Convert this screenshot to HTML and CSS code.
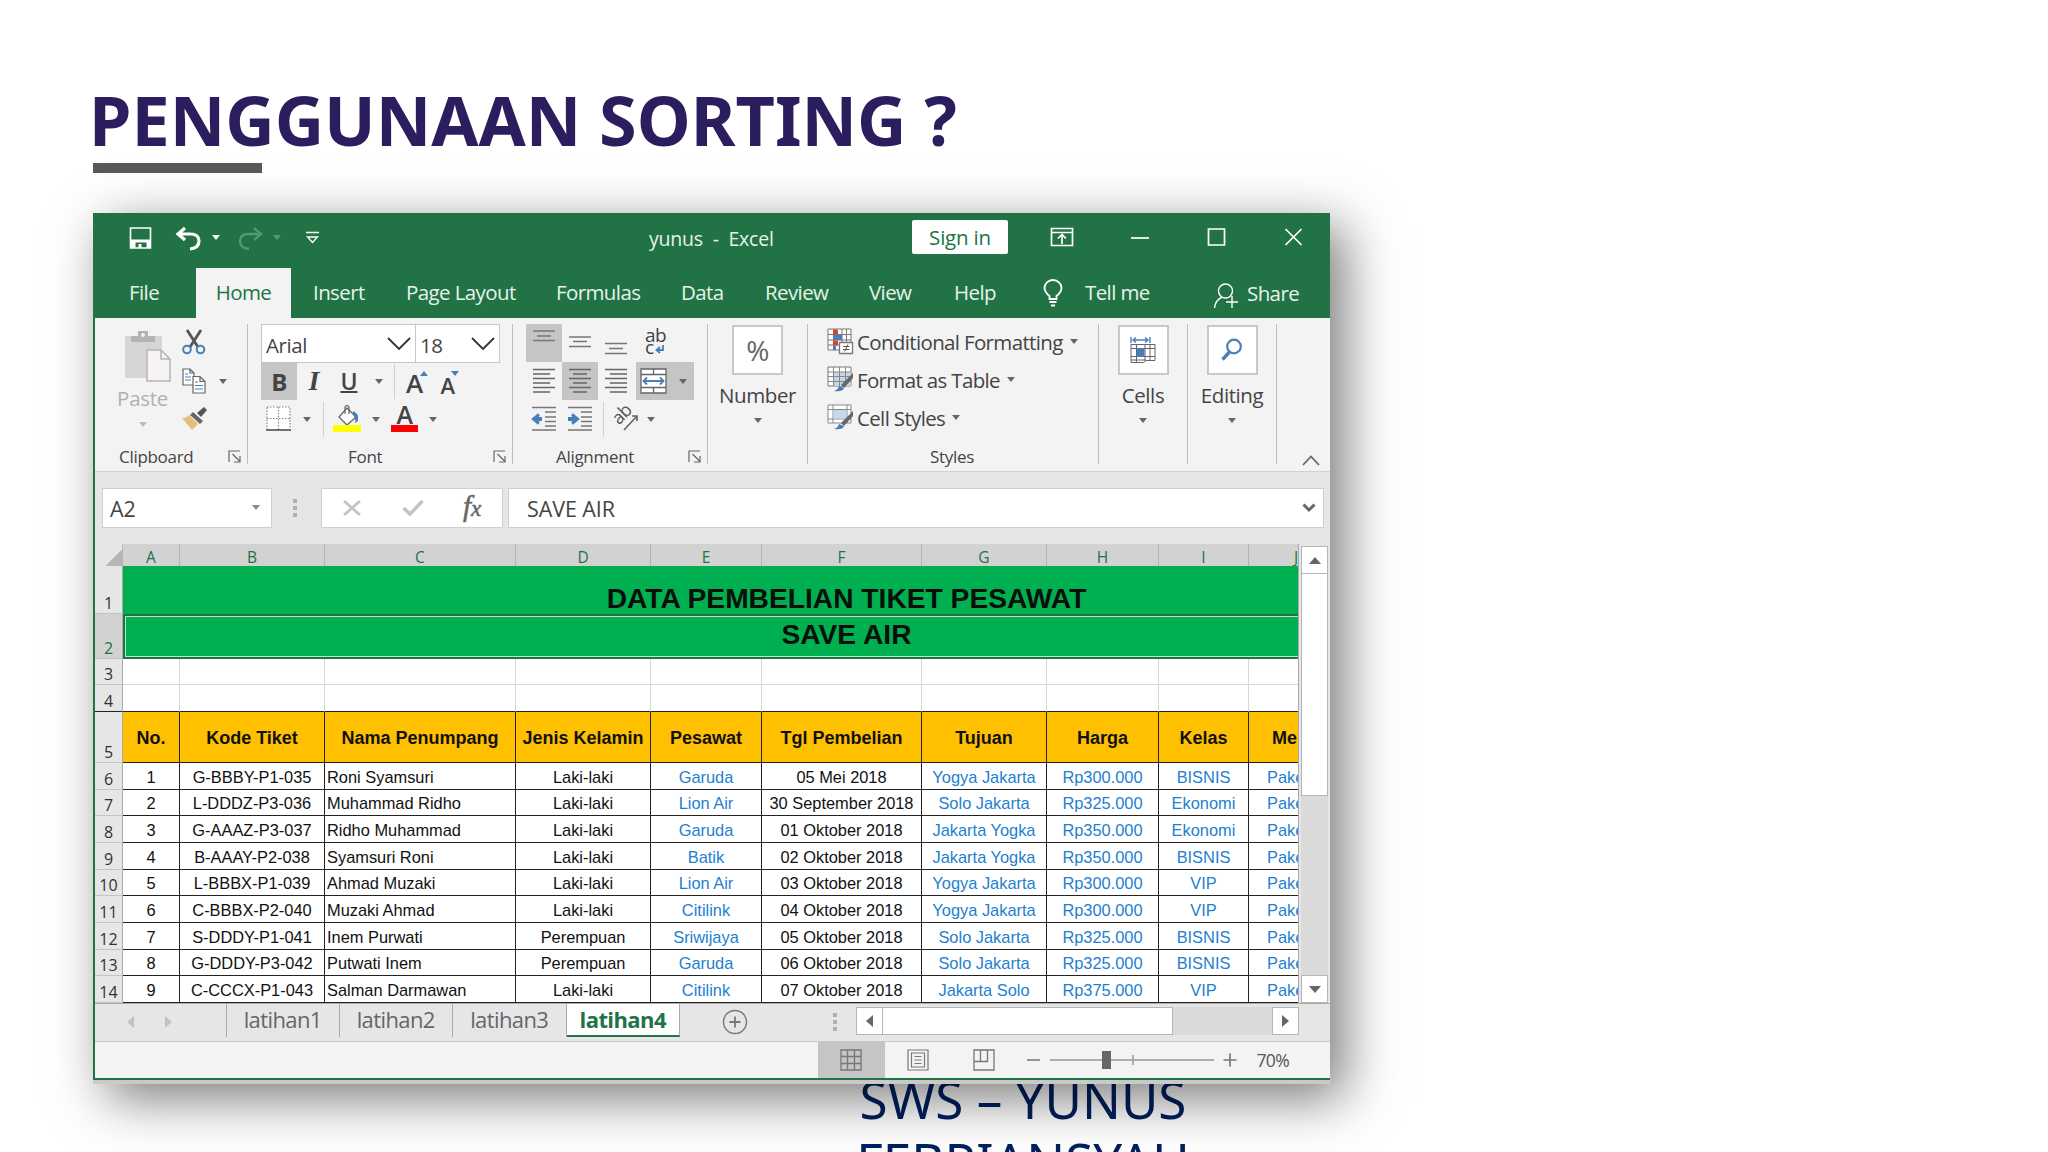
FILE: index.html
```html
<!DOCTYPE html>
<html lang="id">
<head>
    <meta charset="UTF-8">
    <meta name="viewport" content="width=device-width, initial-scale=1.0">
    <title>Penggunaan Sorting</title>
    <link rel="stylesheet" href="styles.css">
</head>
<body>
    <h1 class="slide-title">PENGGUNAAN SORTING ?</h1>
    <div class="title-bar"></div>

    <div class="window">
        <!-- Title bar -->
        <div class="caption">
            <svg class="qat" width="200" height="28" viewBox="0 0 200 28" fill="none" stroke="#fff">
                <path d="M1.500 3h20v20h-20z" stroke-width="1.600"/>
                <path d="M1.500 14.500h20V23h-3.500v-6H6v6H1.500zM9.500 19h3v4h-3z" fill="#fff" stroke="none"/>
                <path d="M6 16.500v6.500M18 16.500v6.500M6 17h12" stroke-width="1"/>
                <path d="M56 3l-7 6 7 6M50 9h11q9 0 9 7t-9 8" stroke-width="3.200"/>
                <path d="M83 10h8l-4 5z" fill="#fff" stroke="none"/>
                <g stroke="#4f9a6f"><path d="M125 3l7 6-7 6M131 9h-11q-9 0-9 7t9 8" stroke-width="2.400"/></g>
                <path d="M144 10h8l-4 5z" fill="#4f9a6f" stroke="none"/>
                <path d="M177 7.500h13M178.500 12h10l-5 5.500z" stroke-width="1.300"/>
            </svg>
            <span class="doc-name">yunus&nbsp; -&nbsp; Excel</span>
            <span class="sign-in">Sign in</span>
            <svg class="win-buttons" width="256" height="24" viewBox="0 0 256 24" fill="none" stroke="#fff" stroke-width="1.700">
                <path d="M1.500 3.500h21v17h-21zM1.500 7.500h21M12 19v-9M8 13.500l4-4 4 4"/>
                <path d="M81 13h18"/>
                <path d="M158.500 4h16v16h-16z"/>
                <path d="M235.500 4l16 16M251.500 4l-16 16"/>
            </svg>
        </div>

        <div class="tabs">
            <span class="tab t-file">File</span>
            <span class="tab t-home">Home</span>
            <span class="tab t-insert">Insert</span>
            <span class="tab t-layout">Page Layout</span>
            <span class="tab t-formulas">Formulas</span>
            <span class="tab t-data">Data</span>
            <span class="tab t-review">Review</span>
            <span class="tab t-view">View</span>
            <span class="tab t-help">Help</span>
            <svg class="bulb" width="20" height="28" viewBox="0 0 20 28" fill="none" stroke="#fff" stroke-width="1.800">
                <path d="M6.500 20v-3Q1.500 13 1.500 9a8.500 8 0 0 1 17 0q0 4-5 8v3zM6.500 23h7M8 26.500h4"/>
            </svg>
            <span class="tab t-tell">Tell me</span>
            <svg class="person" width="26" height="26" viewBox="0 0 26 26" fill="none" stroke="#fff" stroke-width="1.400">
                <ellipse cx="12.500" cy="8" rx="7" ry="7"/>
                <path d="M1.500 25q1-8 7-10.500M19 13v12M13 19h12"/>
            </svg>
            <span class="tab t-share">Share</span>
        </div>

        <!-- Ribbon -->
        <div class="ribbon">
            <div class="group g-clipboard">
                <div class="clip-body">
                    <div class="paste">
                        <svg width="48" height="53" viewBox="0 0 48 53">
                            <path d="M1 6h37v42H1z" fill="#d6d4d6"/>
                            <path d="M7 6h7V1h10v5h7v6H7z" fill="#b3b3b3"/>
                            <circle cx="19" cy="5" r="2" fill="#f3f3f3"/>
                            <path d="M23 20h14l9 9v22H23z" fill="#f6f2f5" stroke="#b5b5b5" stroke-width="1.500"/>
                            <path d="M37 20v9h9" fill="none" stroke="#b5b5b5" stroke-width="1.500"/>
                        </svg>
                        <span class="paste-label">Paste</span>
                        <i class="caret pale"></i>
                    </div>
                    <div class="clip-tools">
                        <div class="line">
                            <svg width="24" height="26" viewBox="0 0 24 26" fill="none">
                                <path d="M5 1l11 17M19 1L8 18" stroke="#555" stroke-width="2.800"/>
                                <circle cx="5" cy="20.500" r="3.800" stroke="#4a7ebb" stroke-width="2"/>
                                <circle cx="18.500" cy="20.500" r="3.800" stroke="#4a7ebb" stroke-width="2"/>
                            </svg>
                        </div>
                        <div class="line">
                            <svg width="24" height="26" viewBox="0 0 24 26" fill="#fff" stroke="#666" stroke-width="1.200">
                                <path d="M1 1h7l4 4v12H1zM8 1v4h4"/>
                                <path d="M3 6h3M3 9h6M3 12h6" stroke="#4a7ebb"/>
                                <path d="M11 8.500h7l5 5V25H11zM18 8.500v5h5"/>
                                <path d="M13 14h3M13 17.500h8M13 21h8" stroke="#4a7ebb"/>
                            </svg>
                            <i class="caret after-13"></i>
                        </div>
                        <div class="line">
                            <svg width="26" height="24" viewBox="0 0 26 24">
                                <path d="M22 0l3 3-6 7-4-4z" fill="#555"/>
                                <path d="M11 5l10 9-3 3L8 8z" fill="#666"/>
                                <path d="M7 8l9 9-6 6L0 11q5 0 7-3z" fill="#e8bd78"/>
                            </svg>
                        </div>
                    </div>
                </div>
                <div class="group-label"><span>Clipboard</span><svg class="launcher" width="14" height="13" viewBox="0 0 14 13"><path d="M1 12V1h11M4.500 4l7 7M12 6v6H6" fill="none" stroke="#666" stroke-width="1.200"/></svg></div>
            </div>

            <div class="group g-font">
                <div class="line">
                    <span class="combo combo-name">Arial<svg width="24" height="14" viewBox="0 0 24 14"><path d="M1 1l11 11L23 1" fill="none" stroke="#333" stroke-width="1.800"/></svg></span>
                    <span class="combo combo-size">18<svg width="24" height="14" viewBox="0 0 24 14"><path d="M1 1l11 11L23 1" fill="none" stroke="#333" stroke-width="1.800"/></svg></span>
                </div>
                <div class="line">
                    <span class="toggle bold">B</span>
                    <span class="italic">I</span>
                    <span class="underline">U</span>
                    <i class="caret after-16"></i>
                    <i class="split split-a"></i>
                    <span class="grow">A</span><i class="tri-up"></i>
                    <span class="shrink">A</span><i class="tri-down"></i>
                </div>
                <div class="line">
                    <svg class="borders-icon" width="26" height="26" viewBox="0 0 26 26" fill="none" stroke="#888" stroke-width="1.200">
                        <path d="M1 1h23v23H1zM12.500 1v23M1 12.500h23" fill="#fff" stroke-dasharray="1.500 1.500"/>
                        <path d="M0 24h25" stroke="#555" stroke-width="1.600"/>
                    </svg>
                    <i class="caret after-11"></i>
                    <i class="split split-b"></i>
                    <svg class="bucket" width="28" height="28" viewBox="0 0 28 28">
                        <path d="M14 3l9 9-9 8-8-8z" fill="#fff" stroke="#666" stroke-width="1.300"/>
                        <path d="M12 9V2q2-3 4 0v7" fill="none" stroke="#666" stroke-width="1.200"/>
                        <path d="M20 6q6 2 5 10l-3 2q1-5-2-8z" fill="#4a7ebb"/>
                        <path d="M0 20h28v7H0z" fill="#ff0"/>
                    </svg>
                    <i class="caret after-11"></i>
                    <span class="font-color">A</span>
                    <i class="caret after-11"></i>
                </div>
                <div class="group-label"><span>Font</span><svg class="launcher" width="14" height="13" viewBox="0 0 14 13"><path d="M1 12V1h11M4.500 4l7 7M12 6v6H6" fill="none" stroke="#666" stroke-width="1.200"/></svg></div>
            </div>

            <div class="group g-align">
                <div class="line">
                    <span class="toggle"><svg width="24" height="26" viewBox="0 0 24 26" stroke="#777" stroke-width="1.500"><path d="M1 1h22M5 6h14M1 10.500h22"/></svg></span>
                    <span class="plain"><svg width="24" height="26" viewBox="0 0 24 26" stroke="#777" stroke-width="1.500"><path d="M1 7h22M5 11.500h14M1 16.500h22"/></svg></span>
                    <span class="plain"><svg width="24" height="26" viewBox="0 0 24 26" stroke="#777" stroke-width="1.500"><path d="M1 13.500h22M5 18.500h14M1 23.500h22"/></svg></span>
                    <span class="wrap-text">ab<br>c<svg width="9" height="9" viewBox="0 0 9 9"><path d="M8 0v5H2M5 2L1.500 5 5 8" fill="none" stroke="#4a7ebb" stroke-width="1.800"/></svg></span>
                </div>
                <div class="line">
                    <span class="plain"><svg width="24" height="26" viewBox="0 0 24 26" stroke="#666" stroke-width="1.400"><path d="M1 1.500h22M1 6h17M1 10.500h22M1 15h17M1 19.500h22M1 24h17"/></svg></span>
                    <span class="toggle"><svg width="24" height="26" viewBox="0 0 24 26" stroke="#666" stroke-width="1.400"><path d="M1 1.500h22M5 6h14M1 10.500h22M5 15h14M1 19.500h22M5 24h14"/></svg></span>
                    <span class="plain"><svg width="24" height="26" viewBox="0 0 24 26" stroke="#666" stroke-width="1.400"><path d="M1 1.500h22M6 6h17M1 10.500h22M6 15h17M1 19.500h22M6 24h17"/></svg></span>
                    <span class="toggle merge">
                        <svg width="27" height="26" viewBox="0 0 27 26" fill="#fff" stroke="#666" stroke-width="1.300">
                            <path d="M1 1h25v24H1zM1 6.500h25M1 19.500h25M13.500 1v5.500M13.500 19.500V25"/>
                            <path d="M4 13h19M7 9.500L3.500 13 7 16.500M20 9.500l3.500 3.500-3.500 3.500" fill="none" stroke="#4a7ebb" stroke-width="1.800"/>
                        </svg>
                        <i class="caret after-12"></i>
                    </span>
                </div>
                <div class="line indent-line">
                    <svg width="26" height="26" viewBox="0 0 26 26" stroke="#777" stroke-width="1.400"><path d="M1 1.500h24M14 6h11M14 11h11M14 15.500h11M14 20h11M1 24h24"/><path d="M11 13H4" stroke="#4a7ebb" stroke-width="4"/><path d="M8 8.500L2.500 13 8 17.500" fill="none" stroke="#4a7ebb" stroke-width="3"/></svg>
                    <svg width="26" height="26" viewBox="0 0 26 26" stroke="#777" stroke-width="1.400"><path d="M1 1.500h24M14 6h11M14 11h11M14 15.500h11M14 20h11M1 24h24"/><path d="M1 13h7" stroke="#4a7ebb" stroke-width="4"/><path d="M5 8.500l5.500 4.500L5 17.500" fill="none" stroke="#4a7ebb" stroke-width="3"/></svg>
                    <i class="split"></i>
                    <svg class="orient" width="26" height="26" viewBox="0 0 26 26"><text x="4" y="19" transform="rotate(-45 5 18)" class="orient-text">ab</text><path d="M10 24L23 10M18 10h5v5" fill="none" stroke="#666" stroke-width="1.700"/></svg>
                    <i class="caret after-8"></i>
                </div>
                <div class="group-label"><span>Alignment</span><svg class="launcher" width="14" height="13" viewBox="0 0 14 13"><path d="M1 12V1h11M4.500 4l7 7M12 6v6H6" fill="none" stroke="#666" stroke-width="1.200"/></svg></div>
            </div>

            <div class="group g-big g-number">
                <span class="big-icon">%</span>
                <span class="big-label">Number</span>
                <i class="caret"></i>
            </div>

            <div class="group g-styles">
                <div class="line">
                    <svg width="27" height="27" viewBox="0 0 27 27">
                        <path d="M1 1h23v21H1zM6.500 1v21M15 1v21M19.500 1v21M1 6.500h23M1 12h23M1 17h23" fill="#fff" stroke="#777"/>
                        <path d="M6 1.500h5v5H6zM6 12.500h5v5H6z" fill="#d24726"/><path d="M6 7h9v5H6zM6 18h3v4H6z" fill="#4a7ebb"/>
                        <path d="M12.500 14.500h13v11h-13z" fill="#fff" stroke="#777" stroke-width="1.300"/>
                        <path d="M16 18.500h6.500M16 21.500h6.500M21 16.500l-3.500 7" stroke="#555"/>
                    </svg>
                    <span>Conditional Formatting</span><i class="caret"></i>
                </div>
                <div class="line">
                    <svg width="27" height="27" viewBox="0 0 27 27">
                        <path d="M1 1h23v19H1z" fill="#fff" stroke="#777"/><path d="M6 6h18v14H6z" fill="#c5d5e6"/>
                        <path d="M6.500 1v19M12.500 1v19M18.500 1v19M1 6h23M1 10.500h23M1 15.500h23" stroke="#888"/>
                        <path d="M26 7v5l-9 10-3-3z" fill="#666"/><path d="M7 25q4-1 5-5l5 2q-1 4-10 3z" fill="#4a7ebb"/>
                    </svg>
                    <span>Format as Table</span><i class="caret"></i>
                </div>
                <div class="line">
                    <svg width="27" height="27" viewBox="0 0 27 27">
                        <path d="M1 1h23v18H1zM6 1v18M1 5.500h23M20 1v18M1 15h23" fill="#fff" stroke="#888"/><path d="M6.500 6h13v8.500h-13z" fill="#c5d9ea"/>
                        <path d="M26 7v5l-9 10-3-3z" fill="#666"/><path d="M7 25q4-1 5-5l5 2q-1 4-10 3z" fill="#4a7ebb"/>
                    </svg>
                    <span>Cell Styles</span><i class="caret"></i>
                </div>
                <div class="group-label"><span>Styles</span></div>
            </div>

            <div class="group g-big g-cells">
                <span class="big-icon">
                    <svg width="26" height="28" viewBox="0 0 26 28" fill="none">
                        <path d="M1 1v6M20 1v6M3 4h15M6 1.500L3 4l3 2.500M15 1.500L18 4l-3 2.500" stroke="#4a7ebb" stroke-width="1.400"/>
                        <path d="M1 8.500h24v16h-9q-2 3-5 2H1zM6.500 8.500V26M15 8.500v16M20 8.500v16M1 12.500h24M1 20.500h24M1 24h15" stroke="#666"/>
                        <path d="M7 12h7.500v9H7z" fill="#4a7ebb"/>
                    </svg>
                </span>
                <span class="big-label">Cells</span>
                <i class="caret"></i>
            </div>

            <div class="group g-big g-editing">
                <span class="big-icon">
                    <svg width="22" height="24" viewBox="0 0 22 24" fill="none" stroke="#4a7ebb"><circle cx="13" cy="8.500" r="6.800" stroke-width="2.200"/><path d="M8.500 14L1.500 21.500" stroke-width="3.400"/></svg>
                </span>
                <span class="big-label">Editing</span>
                <i class="caret"></i>
            </div>
            <svg class="collapse" width="18" height="11" viewBox="0 0 18 11"><path d="M1 10l8-8.500L17 10" fill="none" stroke="#666" stroke-width="1.800"/></svg>
        </div>

        <!-- Formula bar -->
        <div class="formula-bar">
            <div class="field name-box">A2<i class="caret"></i></div>
            <div class="dots"><i></i><i></i><i></i></div>
            <div class="field fx-box">
                <svg width="20" height="18" viewBox="0 0 20 18"><path d="M2 2l16 14M18 2L2 16" stroke="#c3c3c3" stroke-width="2.800"/></svg>
                <svg width="22" height="18" viewBox="0 0 22 18"><path d="M1.500 9l6.500 6L20.500 2" fill="none" stroke="#c3c3c3" stroke-width="3.400"/></svg>
                <span class="fx">f<small>x</small></span>
            </div>
            <div class="field formula">SAVE AIR<svg width="14" height="10" viewBox="0 0 14 10"><path d="M1.500 1.500L7 7l5.500-5.500" fill="none" stroke="#666" stroke-width="3"/></svg></div>
        </div>

        <!-- Worksheet -->
        <div class="sheet-area">
            <div class="sheet">
                <div class="row letters">
                    <span class="corner"></span><span>A</span><span>B</span><span>C</span><span>D</span><span>E</span><span>F</span><span>G</span><span>H</span><span>I</span><span>J</span>
                </div>
                <div class="merged-row m1"><span class="num">1</span><div class="merged">DATA PEMBELIAN TIKET PESAWAT</div></div>
                <div class="merged-row m2"><span class="num active">2</span><div class="merged">SAVE AIR</div></div>
                <div class="row blank"><span class="num">3</span><span></span><span></span><span></span><span></span><span></span><span></span><span></span><span></span><span></span><span></span></div>
                <div class="row blank last"><span class="num">4</span><span></span><span></span><span></span><span></span><span></span><span></span><span></span><span></span><span></span><span></span></div>
                <div class="row heads"><span class="num">5</span><span>No.</span><span>Kode Tiket</span><span>Nama Penumpang</span><span>Jenis Kelamin</span><span>Pesawat</span><span>Tgl Pembelian</span><span>Tujuan</span><span>Harga</span><span>Kelas</span><span>Menu</span></div>
                <div class="row data"><span class="num">6</span><span>1</span><span>G-BBBY-P1-035</span><span>Roni Syamsuri</span><span>Laki-laki</span><span>Garuda</span><span>05 Mei 2018</span><span>Yogya Jakarta</span><span>Rp300.000</span><span>BISNIS</span><span>Paket</span></div>
                <div class="row data"><span class="num">7</span><span>2</span><span>L-DDDZ-P3-036</span><span>Muhammad Ridho</span><span>Laki-laki</span><span>Lion Air</span><span>30 September 2018</span><span>Solo Jakarta</span><span>Rp325.000</span><span>Ekonomi</span><span>Paket</span></div>
                <div class="row data"><span class="num">8</span><span>3</span><span>G-AAAZ-P3-037</span><span>Ridho Muhammad</span><span>Laki-laki</span><span>Garuda</span><span>01 Oktober 2018</span><span>Jakarta Yogka</span><span>Rp350.000</span><span>Ekonomi</span><span>Paket</span></div>
                <div class="row data"><span class="num">9</span><span>4</span><span>B-AAAY-P2-038</span><span>Syamsuri Roni</span><span>Laki-laki</span><span>Batik</span><span>02 Oktober 2018</span><span>Jakarta Yogka</span><span>Rp350.000</span><span>BISNIS</span><span>Paket</span></div>
                <div class="row data"><span class="num">10</span><span>5</span><span>L-BBBX-P1-039</span><span>Ahmad Muzaki</span><span>Laki-laki</span><span>Lion Air</span><span>03 Oktober 2018</span><span>Yogya Jakarta</span><span>Rp300.000</span><span>VIP</span><span>Paket</span></div>
                <div class="row data"><span class="num">11</span><span>6</span><span>C-BBBX-P2-040</span><span>Muzaki Ahmad</span><span>Laki-laki</span><span>Citilink</span><span>04 Oktober 2018</span><span>Yogya Jakarta</span><span>Rp300.000</span><span>VIP</span><span>Paket</span></div>
                <div class="row data"><span class="num">12</span><span>7</span><span>S-DDDY-P1-041</span><span>Inem Purwati</span><span>Perempuan</span><span>Sriwijaya</span><span>05 Oktober 2018</span><span>Solo Jakarta</span><span>Rp325.000</span><span>BISNIS</span><span>Paket</span></div>
                <div class="row data"><span class="num">13</span><span>8</span><span>G-DDDY-P3-042</span><span>Putwati Inem</span><span>Perempuan</span><span>Garuda</span><span>06 Oktober 2018</span><span>Solo Jakarta</span><span>Rp325.000</span><span>BISNIS</span><span>Paket</span></div>
                <div class="row data"><span class="num">14</span><span>9</span><span>C-CCCX-P1-043</span><span>Salman Darmawan</span><span>Laki-laki</span><span>Citilink</span><span>07 Oktober 2018</span><span>Jakarta Solo</span><span>Rp375.000</span><span>VIP</span><span>Paket</span></div>
            </div>
            <div class="vscroll">
                <span class="sb-button"><i class="arrow up"></i></span>
                <span class="v-thumb"></span>
                <span class="sb-button"><i class="arrow down"></i></span>
            </div>
        </div>

        <!-- Sheet tabs -->
        <div class="sheet-tabs">
            <i class="arrow left pale-arrow nav-prev"></i>
            <i class="arrow right pale-arrow nav-next"></i>
            <span class="sheet-tab first">latihan1</span>
            <span class="sheet-tab">latihan2</span>
            <span class="sheet-tab">latihan3</span>
            <span class="sheet-tab current">latihan4</span>
            <svg class="add" width="26" height="26" viewBox="0 0 26 26" fill="none" stroke="#777" stroke-width="1.400"><circle cx="13" cy="13" r="11.500"/><path d="M13 7.500v11M7.500 13h11" stroke-width="1.800"/></svg>
            <div class="dots tab-dots"><i></i><i></i><i></i></div>
            <div class="hscroll">
                <span class="sb-button"><i class="arrow left"></i></span>
                <span class="h-thumb"></span>
                <span class="sb-button h-end"><i class="arrow right"></i></span>
            </div>
        </div>

        <!-- Status bar -->
        <div class="status">
            <span class="view on"><svg width="22" height="22" viewBox="0 0 22 22" fill="none" stroke="#777" stroke-width="1.300"><path d="M1 1h20v20H1zM7.500 1v20M14.500 1v20M1 7.500h20M1 14.500h20"/></svg></span>
            <span class="view"><svg width="22" height="22" viewBox="0 0 22 22" fill="none" stroke="#777" stroke-width="1.200"><path d="M1 1h20v20H1zM4.500 4h13v14h-13zM7.500 7.500h7M7.500 11h7M7.500 14.500h7"/></svg></span>
            <span class="view"><svg width="22" height="22" viewBox="0 0 22 22" fill="none" stroke="#777" stroke-width="1.300"><path d="M1 1h20v20H1zM1 12.500h13.500V1M7.500 1v11.500"/></svg></span>
            <svg class="zoom-bar" width="212" height="22" viewBox="0 0 212 22" stroke="#777">
                <path d="M1 11h13M197.500 11h13M204 4.500v13" stroke-width="1.700"/>
                <path d="M24 11h164M107 6v10" stroke="#999" stroke-width="1.500"/>
                <path d="M76 2h9v18h-9z" fill="#666" stroke="none"/>
            </svg>
            <span class="percent">70%</span>
        </div>
        <div class="bottom-edge"></div>
    </div>

    <p class="footer">SWS – YUNUS<br>FEBRIANSYAH</p>
</body>
</html>
```
FILE: styles.css
```css
* {
    box-sizing: border-box;
}

body {
    margin: 0;
    width: 2048px;
    height: 1152px;
    overflow: hidden;
    background: #fff;
    font-family: "Open Sans", "Noto Sans", sans-serif;
}

svg {
    display: block;
    flex: none;
}

/* Slide title */
.slide-title {
    margin: 0;
    padding: 72px 0 0 89px;
    height: 163px;
    font-family: "Noto Sans", sans-serif;
    font-size: 68.3px;
    line-height: 96px;
    font-weight: 700;
    color: #2b1d5e;
    white-space: nowrap;
}

.title-bar {
    width: 169px;
    height: 10px;
    margin-left: 92.5px;
    background: #595959;
}

/* Window */
.window {
    position: relative;
    z-index: 1;
    width: 1237px;
    height: 871px;
    margin: 40px 0 0 93px;
    background: #e6e6e6;
    border-left: 2px solid #217346;
    box-shadow: 14px 14px 50px rgba(0, 0, 0, 0.53);
    color: #444;
    font-size: 20.5px;
    letter-spacing: -0.65px;
    white-space: nowrap;
}

.caption {
    display: flex;
    align-items: center;
    height: 55px;
    padding: 0 0 7px 34px;
    background: #217346;
    color: #e6f2ea;
    font-size: 19.5px;
    letter-spacing: -0.2px;
}

.qat {
    margin-top: 4px;
}

.doc-name {
    width: 263px;
    margin-left: 320px;
    padding-top: 3px;
}

.sign-in {
    width: 96px;
    height: 34px;
    border-radius: 2px;
    background: #fff;
    color: #217346;
    text-align: center;
    line-height: 34px;
    font-size: 20.5px;
}

.win-buttons {
    margin-left: 42px;
}

.tabs {
    display: flex;
    align-items: center;
    height: 50px;
    background: #217346;
    color: #e6f2ea;
    font-size: 20.5px;
    letter-spacing: -0.6px;
}

.tab {
    padding-bottom: 2px;
}

.t-file { width: 101px; padding-left: 34px; }
.t-home {
    width: 95px;
    height: 50px;
    line-height: 49px;
    text-align: center;
    background: #f3f3f3;
    color: #217346;
}
.t-insert { width: 115px; padding-left: 22px; }
.t-layout { width: 150px; }
.t-formulas { width: 125px; }
.t-data { width: 84px; }
.t-review { width: 104px; }
.t-view { width: 85px; }
.t-help { width: 89px; }
.bulb { margin-right: 22px; }
.t-tell { width: 128px; }
.person { margin: 6px 8px 0 0; }
.t-share { padding-bottom: 0; }

/* Ribbon */
.ribbon {
    display: flex;
    height: 154px;
    padding-top: 6px;
    background: #f3f3f3;
    border-bottom: 1px solid #d2d2d2;
}

.group {
    height: 140px;
    border-right: 1px solid #bebebe;
}

.line {
    display: flex;
    align-items: center;
    height: 38px;
}

.caret {
    flex: none;
    width: 0;
    height: 0;
    border: 4px solid transparent;
    border-top: 5px solid #666;
    border-bottom: none;
}

.pale { border-top-color: #bbb; }
.after-8 { margin-left: 7px; }
.after-11 { margin-left: 11px; }
.after-12 { margin-left: 12px; }
.after-13 { margin-left: 13px; }
.after-16 { margin-left: 17px; }

.split {
    flex: none;
    width: 1px;
    height: 35px;
    background: #d0d0d0;
}

.group-label {
    display: flex;
    align-items: center;
    height: 34px;
    font-size: 17px;
    letter-spacing: -0.3px;
}

.launcher { margin: 0 0 0 auto; }

.g-clipboard { width: 153px; }
.clip-body { display: flex; height: 114px; }
.paste {
    display: flex;
    flex-direction: column;
    align-items: center;
    width: 87px;
    padding: 6px 0 0 11px;
    color: #b0b0b0;
}
.paste svg { margin-left: 7px; }
.paste-label { line-height: 28px; margin: 1px 3px 10px 0; letter-spacing: -0.3px; }
.paste .caret { margin-right: 2px; }
.clip-tools .line:first-child svg { margin-top: -2px; }
.g-clipboard .group-label { margin-top: 1px; padding: 0 5px 0 24px; }
.g-font .group-label { margin-top: 1px; padding: 0 5px 0 87px; }
.g-align .group-label { margin-top: 1px; padding: 0 5px 0 30px; }

.g-font { width: 265px; padding-left: 13px; }
.combo {
    display: flex;
    align-items: center;
    justify-content: space-between;
    height: 39px;
    border: 1px solid #c6c6c6;
    background: #fff;
    padding: 3px 4px 0;
    color: #444;
    letter-spacing: -0.4px;
}
.combo svg { margin-top: -2px; }
.combo-name { width: 155px; }
.combo-size { width: 84px; border-left: none; }

.toggle,
.plain {
    display: flex;
    align-items: center;
    justify-content: center;
    width: 36px;
    height: 38px;
    flex: none;
}
.toggle { background: #c5c5c5; }

.bold { font-weight: 700; font-size: 24px; }
.italic {
    width: 36px;
    padding-right: 3px;
    text-align: center;
    font-family: "Liberation Serif", serif;
    font-style: italic;
    font-weight: 700;
    font-size: 28px;
}
.underline {
    width: 18px;
    text-align: center;
    font-weight: 600;
    font-size: 23px;
    letter-spacing: 0;
    text-decoration: underline;
    text-decoration-thickness: 2px;
    margin-left: 7px;
}
.split-a { margin: 0 11px; }
.split-b { margin: 0 9px 0 12px; }
.grow { font-size: 26px; font-weight: 600; line-height: 38px; padding-top: 4px; }
.shrink { font-size: 22px; font-weight: 600; padding-top: 7px; margin-left: 13px; }
.tri-up,
.tri-down {
    border: 4px solid transparent;
    margin: -16px 0 0 -3px;
}
.tri-up { border-bottom: 5px solid #4a7ebb; border-top: none; }
.tri-down { border-top: 5px solid #4a7ebb; border-bottom: none; }
.borders-icon { margin-left: 5px; }
.font-color {
    width: 27px;
    height: 26px;
    margin-left: 11px;
    border-bottom: 7px solid #f00;
    text-align: center;
    font-size: 25px;
    font-weight: 600;
    line-height: 17px;
}

.g-align { width: 195px; padding-left: 13px; }
.wrap-text {
    margin-left: 11px;
    font-size: 19px;
    line-height: 12px;
    padding-bottom: 3px;
}
.wrap-text svg { display: inline-block; margin-left: 2px; }
.merge { width: 58px; margin-left: 2px; padding-right: 3px; }
.indent-line { padding-left: 5px; }
.indent-line svg { margin-right: 10px; }
.indent-line .orient { margin: 0 0 0 10px; }
.orient-text { font-size: 18px; fill: #555; }

.g-big {
    display: flex;
    flex-direction: column;
    align-items: center;
}
.big-icon {
    display: flex;
    align-items: center;
    justify-content: center;
    width: 51px;
    height: 50px;
    margin-top: 1px;
    border: 2px solid #c8c8c8;
    background: #fff;
    font-size: 28px;
    color: #666;
}
.big-label { line-height: 28px; margin: 6px 0 9px; letter-spacing: -0.4px; }
.g-number { width: 100px; }
.g-cells, .g-editing { width: 89px; }

.g-styles { width: 291px; padding-left: 19px; }
.g-styles .line span { margin: -3px 7px 0 3px; }
.g-styles .line .caret { margin-top: -4px; }
.g-styles .line svg { margin-top: -3px; }
.g-styles .group-label { margin-top: 1px; padding-left: 103px; }
.collapse { margin: 131px 0 0 25px; }

/* Formula bar */
.formula-bar {
    display: flex;
    height: 72px;
    padding-top: 16px;
}
.field {
    display: flex;
    align-items: center;
    height: 40px;
    border: 1px solid #cfcfcf;
    background: #fff;
    font-size: 21.5px;
    letter-spacing: -0.1px;
}
.name-box {
    width: 170px;
    margin-left: 7px;
    padding: 0 11px 0 7px;
    justify-content: space-between;
}
.name-box .caret { margin-top: -2px; border-top-color: #888; }
.dots {
    display: flex;
    flex-direction: column;
    gap: 3px;
    width: 4px;
    margin: 11px 24px 0 21px;
}
.dots i { width: 4px; height: 4px; background: #b0b0b0; }
.fx-box { width: 182px; padding-left: 20px; gap: 40px; }
.fx {
    font-family: "Liberation Serif", serif;
    font-style: italic;
    font-size: 29px;
    color: #666;
    -webkit-text-stroke: 0.5px #666;
    margin: -3px 0 0 -1px;
}
.fx small { font-size: 23px; }
.formula {
    width: 816px;
    margin-left: 5px;
    padding: 0 7px 0 18px;
    justify-content: space-between;
}

/* Worksheet */
.sheet-area {
    display: flex;
    height: 459px;
    letter-spacing: 0;
}
.sheet {
    width: 1204px;
    overflow: hidden;
    background: #fff;
    border-right: 1px solid #ababab;
    font-family: "Liberation Sans", Arial, sans-serif;
    color: #111;
}
.row {
    display: grid;
    grid-template-columns: 28px 57px 145px 191px 135px 111px 160px 125px 112px 90px 95px;
}
.row span {
    display: flex;
    align-items: center;
    justify-content: center;
    border-right: 1px solid #222;
    border-bottom: 1px solid #222;
}
.row .num,
.merged-row .num {
    display: flex;
    flex: none;
    align-items: flex-end;
    justify-content: center;
    width: 28px;
    padding: 0;
    background: #e6e6e6;
    border-right: 1px solid #ababab;
    border-bottom: 1px solid #c4c4c4;
    color: #333;
    font-family: "Open Sans", sans-serif;
    font-size: 16px;
    line-height: 20px;
}
.merged-row .active { background: #d2d2d2; color: #217346; }

.letters {
    height: 22px;
    font-family: "Open Sans", sans-serif;
    font-size: 15.5px;
    color: #217346;
}
.letters span {
    background: #d2d2d2;
    border-right: 1px solid #b5b5b5;
    border-bottom: 2px solid #217346;
    padding-top: 2px;
}
.letters .corner {
    border-bottom: 1px solid #b5b5b5;
    background: linear-gradient(135deg, #e6e6e6 62%, #b5b5b5 62%);
}

.merged-row { display: flex; }
.merged {
    flex: none;
    width: 1447px;
    background: #00b050;
    text-align: center;
    font-size: 28.2px;
    font-weight: 700;
    color: #0b0f0b;
}
.m1 { height: 48px; }
.m1 .merged { line-height: 32px; padding-top: 16px; }
.m2 { height: 45px; }
.m2 .merged {
    border: 2px solid #217346;
    box-shadow: inset 0 0 0 1px #b5e8c9;
    line-height: 36px;
}

.blank { height: 26px; }
.blank.last { height: 27px; }
.blank span { border-color: #d8d8d8; }
.blank.last span { border-bottom-color: #222; }
.heads {
    height: 51px;
    font-size: 18px;
    font-weight: 700;
}
.heads span { background: #ffc000; padding-top: 3px; }
.heads .num { font-weight: 400; }
.heads span:last-child { justify-content: flex-start; padding-left: 23px; }
.data {
    height: 26.67px;
    font-size: 16.4px;
}
.data span { padding-top: 3px; }
.data span:nth-child(4) { justify-content: flex-start; padding-left: 2px; }
.data span:nth-child(6),
.data span:nth-child(n+8) { color: #2380cf; }
.data span:last-child { justify-content: flex-start; padding-left: 18px; }

/* Scrollbars */
.vscroll {
    display: flex;
    flex-direction: column;
    justify-content: space-between;
    width: 27px;
    margin: 2px 0 0 2px;
    background: #dadada;
}
.sb-button {
    display: flex;
    align-items: center;
    justify-content: center;
    width: 27px;
    height: 28px;
    background: #fff;
    border: 1px solid #b5b5b5;
}
.v-thumb {
    height: 223px;
    margin: -1px 0 auto;
    background: #fff;
    border: 1px solid #b5b5b5;
}
.arrow { width: 0; height: 0; border: 6px solid transparent; }
.up { border-bottom: 7px solid #666; border-top: none; }
.down { border-top: 7px solid #666; border-bottom: none; }
.left { border-right: 7px solid #666; border-left: none; }
.right { border-left: 7px solid #666; border-right: none; }

/* Sheet tabs */
.sheet-tabs {
    display: flex;
    height: 39px;
    border-top: 1px solid #ababab;
    border-bottom: 1px solid #c9c9c9;
}
.nav-prev { margin: 12px 0 0 32px; }
.nav-next { margin: 12px 54px 0 31px; }
.left.pale-arrow { border-right-color: #c3c3c3; }
.right.pale-arrow { border-left-color: #c3c3c3; }
.sheet-tab {
    width: 113.5px;
    height: 33px;
    border-right: 1px solid #ababab;
    text-align: center;
    font-size: 22px;
    letter-spacing: -0.6px;
    line-height: 31px;
    color: #666;
}
.first { border-left: 1px solid #ababab; }
.current {
    background: #fff;
    color: #217346;
    font-weight: 700;
    border-bottom: 2px solid #217346;
}
.add { margin: 5px 0 0 42px; }
.tab-dots { margin: 9px 19px 0 85px; }
.hscroll {
    display: flex;
    width: 443px;
    height: 28px;
    margin-top: 3px;
    background: #dadada;
}
.h-thumb {
    width: 291px;
    margin-left: -1px;
    background: #fff;
    border: 1px solid #b5b5b5;
}
.h-end { margin-left: auto; }

/* Status bar */
.status {
    display: flex;
    align-items: center;
    height: 36px;
    padding: 0 0 1px 723px;
    background: #f3f3f3;
    font-size: 17.5px;
    color: #555;
}
.view {
    display: flex;
    align-items: center;
    justify-content: center;
    width: 66.5px;
    height: 36px;
}
.on { background: #c5c5c5; }
.zoom-bar { margin-left: 8px; }
.percent { margin: 1px 0 0 19px; }
.bottom-edge {
    height: 6px;
    margin-left: -2px;
    border-top: 2px solid #217346;
    background: #c9c9c9;
}

/* Footer text partly hidden under the window */
.footer {
    margin: -16px 0 0 723px;
    width: 600px;
    text-align: center;
    font-family: "Noto Sans", sans-serif;
    font-size: 51.2px;
    line-height: 62px;
    color: #002060;
    white-space: nowrap;
}
```
